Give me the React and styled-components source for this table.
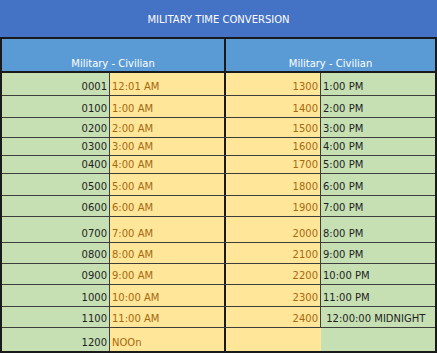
import React from "react";
import styled, { createGlobalStyle } from "styled-components";

const GlobalStyle = createGlobalStyle`
  body {
    margin: 0;
    background: #ffffff;
    font-family: "DejaVu Sans", Verdana, sans-serif;
  }
`;

const rows = [
  { h: 23, am: ["0001", "12:01 AM"], pm: ["1300", "1:00 PM"] },
  { h: 22, am: ["0100", "1:00 AM"], pm: ["1400", "2:00 PM"] },
  { h: 20, am: ["0200", "2:00 AM"], pm: ["1500", "3:00 PM"] },
  { h: 18, am: ["0300", "3:00 AM"], pm: ["1600", "4:00 PM"] },
  { h: 18, am: ["0400", "4:00 AM"], pm: ["1700", "5:00 PM"] },
  { h: 22, am: ["0500", "5:00 AM"], pm: ["1800", "6:00 PM"] },
  { h: 21, am: ["0600", "6:00 AM"], pm: ["1900", "7:00 PM"] },
  { h: 26, am: ["0700", "7:00 AM"], pm: ["2000", "8:00 PM"] },
  { h: 21, am: ["0800", "8:00 AM"], pm: ["2100", "9:00 PM"] },
  { h: 21, am: ["0900", "9:00 AM"], pm: ["2200", "10:00 PM"] },
  { h: 22, am: ["1000", "10:00 AM"], pm: ["2300", "11:00 PM"] },
  { h: 21, am: ["1100", "11:00 AM"], pm: ["2400", "\u00a012:00:00 MIDNIGHT"] },
  { h: 23, am: ["1200", "NOOn"], pm: ["", ""], last: true },
];

const Page = styled.div`
  width: 437px;
  height: 353px;
  overflow: hidden;
`;

const Title = styled.div`
  height: 37px;
  background: #4472c4;
  color: #ffffff;
  font-size: 10px;
  display: flex;
  align-items: center;
  justify-content: center;
  padding-top: 1px;
  box-sizing: border-box;
`;

const Sheet = styled.div`
  border: 2px solid #1a1a1a;
  box-sizing: border-box;
  width: 437px;
`;

const HeadRow = styled.div`
  display: grid;
  grid-template-columns: 224px 209px;
  height: 34px;
  border-bottom: 2px solid #1a1a1a;
  box-sizing: border-box;
  background: #5b9bd5;
`;

const HeadCell = styled.div`
  color: #ffffff;
  font-size: 10px;
  display: flex;
  align-items: flex-end;
  justify-content: center;
  padding-bottom: 2px;
  border-right: ${({ $split }) => ($split ? "2px solid #1a1a1a" : "none")};
`;

const Row = styled.div`
  display: grid;
  grid-template-columns: 108px 116px 95px 114px;
  height: ${({ $h }) => $h}px;
  box-sizing: border-box;
  border-bottom: ${({ $last }) => ($last ? "none" : "1px solid #3d3d3d")};
`;

const Cell = styled.div`
  background: ${({ $tone }) => ($tone === "green" ? "#c6e0b4" : "#ffe699")};
  color: ${({ $tone }) => ($tone === "green" ? "#1e1e1e" : "#a8680f")};
  font-size: 10px;
  line-height: 12px;
  white-space: nowrap;
  display: flex;
  align-items: flex-end;
  justify-content: ${({ $right }) => ($right ? "flex-end" : "flex-start")};
  padding: 0 2px 2px;
  border-right: ${({ $edge }) => $edge || "none"};
`;

export default function App() {
  return (
    <Page>
      <GlobalStyle />
      <Title>MILITARY TIME CONVERSION</Title>
      <Sheet>
        <HeadRow>
          <HeadCell $split>Military - Civilian</HeadCell>
          <HeadCell>Military - Civilian</HeadCell>
        </HeadRow>
        {rows.map((r, i) => (
          <Row key={i} $h={r.h} $last={r.last}>
            <Cell $tone="green" $right $edge="1px solid #3d3d3d">
              {r.am[0]}
            </Cell>
            <Cell $tone="yellow" $edge="2px solid #1a1a1a">
              {r.am[1]}
            </Cell>
            <Cell
              $tone="yellow"
              $right
              $edge={r.last ? "none" : "1px solid #3d3d3d"}
            >
              {r.pm[0]}
            </Cell>
            <Cell $tone="green">{r.pm[1]}</Cell>
          </Row>
        ))}
      </Sheet>
    </Page>
  );
}
